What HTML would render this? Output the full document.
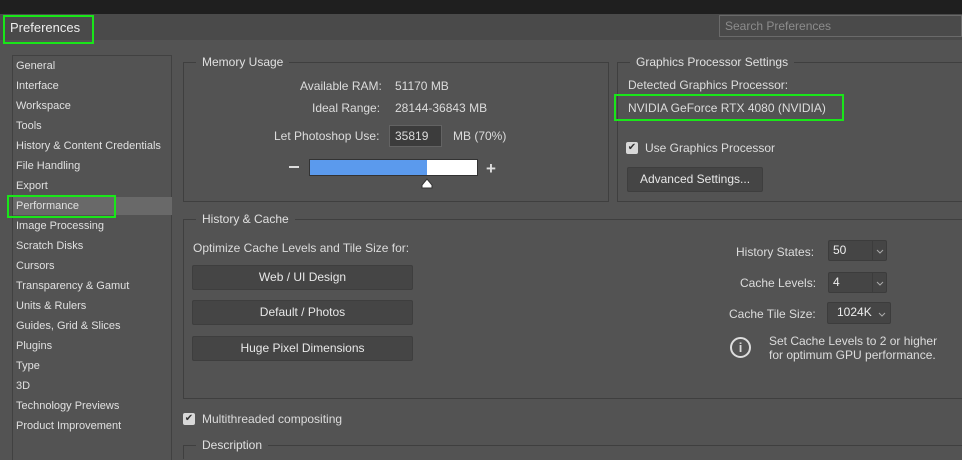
<html style="overflow:hidden;height:460px"><head><style>
body{margin:0;width:962px;height:460px;overflow:hidden;background:#535353;font-family:"Liberation Sans",sans-serif;font-size:12px;color:#dcdcdc;position:relative}
.a{position:absolute;white-space:nowrap}
.top{left:0;top:0;width:962px;height:14px;background:#1f1f1f}
.title{left:0;top:14px;width:962px;height:26px;background:#4a4a4a}
.grn{border:2px solid #19e619;box-sizing:border-box}
.list{left:12px;top:55px;width:160px;height:405px;border:1px solid #414141;border-bottom:none;box-sizing:border-box;background:#535353}
.li{position:absolute;left:3px;font-size:11px;color:#e0e0e0}
fieldset{position:absolute;margin:0;padding:0;border:1px solid #3f3f3f}
legend{padding:0 6px;margin-left:12px;font-size:12px;color:#e0e0e0}
.btn{position:absolute;background:#454545;border:1px solid #3e3e3e;border-radius:2px;color:#e8e8e8;text-align:center;box-sizing:border-box}
.dd{position:absolute;background:#454545;border:1px solid #3c3c3c;border-radius:2px;box-sizing:border-box;color:#eee;padding-left:4px;line-height:19px}
.cb{position:absolute;width:12px;height:12px;background:#d8d8d8;border-radius:2px;color:#333;font-size:10px;line-height:12px;text-align:center}
.chev{position:absolute;top:0;height:100%;border-left:1px solid #3c3c3c;width:14px}
</style></head><body>
<div class="a top"></div>
<div class="a title"></div>
<div class="a grn" style="left:3px;top:15px;width:91px;height:29px"></div>
<div class="a" style="left:10px;top:20px;font-size:13px;color:#eee">Preferences</div>
<div class="a" style="left:719px;top:15px;width:243px;height:22px;border:1px solid #6a6a6a;box-sizing:border-box;background:#4a4a4a"></div>
<div class="a" style="left:725px;top:19px;color:#8c8c8c">Search Preferences</div>
<div class="a list">
<div class="a" style="left:0;top:141px;width:159px;height:18px;background:#696969"></div>
<div class="li" style="top:4px">General</div>
<div class="li" style="top:24px">Interface</div>
<div class="li" style="top:44px">Workspace</div>
<div class="li" style="top:64px">Tools</div>
<div class="li" style="top:84px">History &amp; Content Credentials</div>
<div class="li" style="top:104px">File Handling</div>
<div class="li" style="top:124px">Export</div>
<div class="li" style="top:144px">Performance</div>
<div class="li" style="top:164px">Image Processing</div>
<div class="li" style="top:184px">Scratch Disks</div>
<div class="li" style="top:204px">Cursors</div>
<div class="li" style="top:224px">Transparency &amp; Gamut</div>
<div class="li" style="top:244px">Units &amp; Rulers</div>
<div class="li" style="top:264px">Guides, Grid &amp; Slices</div>
<div class="li" style="top:284px">Plugins</div>
<div class="li" style="top:304px">Type</div>
<div class="li" style="top:324px">3D</div>
<div class="li" style="top:344px">Technology Previews</div>
<div class="li" style="top:364px">Product Improvement</div>
</div>
<div class="a grn" style="left:7px;top:195px;width:109px;height:23px"></div>
<fieldset style="left:183px;top:55px;width:424px;height:145px"><legend>Memory Usage</legend></fieldset>
<div class="a" style="left:300px;top:79px">Available RAM:</div>
<div class="a" style="left:395px;top:79px">51170 MB</div>
<div class="a" style="left:312px;top:101px">Ideal Range:</div>
<div class="a" style="left:395px;top:101px">28144-36843 MB</div>
<div class="a" style="left:274px;top:129px">Let Photoshop Use:</div>
<div class="a" style="left:389px;top:125px;width:53px;height:22px;background:#3c3c3c;border:1px solid #636363;box-sizing:border-box;padding:3px 5px">35819</div>
<div class="a" style="left:453px;top:129px">MB (70%)</div>
<div class="a" style="left:289px;top:166px;width:10px;height:2px;background:#ddd"></div>
<div class="a" style="left:309px;top:159px;width:169px;height:17px;background:#fff;border:1px solid #333;box-sizing:border-box"><div style="width:117px;height:15px;background:#5b9aed"></div></div>
<div class="a" style="left:486px;top:159px;font-size:17px;font-weight:bold;color:#ddd">+</div>
<svg class="a" style="left:421px;top:178px" width="12" height="11"><path d="M1 10 L1 7 L6 1 L11 7 L11 10 Z" fill="#fff" stroke="#333"/></svg>
<fieldset style="left:617px;top:55px;width:345px;height:145px;border-right:none"><legend>Graphics Processor Settings</legend></fieldset>
<div class="a" style="left:628px;top:78px">Detected Graphics Processor:</div>
<div class="a grn" style="left:614px;top:94px;width:230px;height:27px"></div>
<div class="a" style="left:628px;top:101px">NVIDIA GeForce RTX 4080 (NVIDIA)</div>
<div class="cb" style="left:626px;top:142px">✔</div>
<div class="a" style="left:645px;top:141px">Use Graphics Processor</div>
<div class="btn" style="left:627px;top:167px;width:136px;height:25px;line-height:23px">Advanced Settings...</div>
<fieldset style="left:183px;top:212px;width:779px;height:185px;border-right:none"><legend>History &amp; Cache</legend></fieldset>
<div class="a" style="left:193px;top:241px">Optimize Cache Levels and Tile Size for:</div>
<div class="btn" style="left:192px;top:265px;width:221px;height:25px;line-height:23px">Web / UI Design</div>
<div class="btn" style="left:192px;top:300px;width:221px;height:25px;line-height:23px">Default / Photos</div>
<div class="btn" style="left:192px;top:336px;width:221px;height:25px;line-height:23px">Huge Pixel Dimensions</div>
<div class="a" style="left:736px;top:245px">History States:</div>
<div class="dd" style="left:828px;top:240px;width:59px;height:21px">50<div class="chev" style="left:43px"><svg width="14" height="19"><path d="M4 9 L7 12 L10 9" fill="none" stroke="#aaa"/></svg></div></div>
<div class="a" style="left:740px;top:276px">Cache Levels:</div>
<div class="dd" style="left:828px;top:272px;width:59px;height:21px">4<div class="chev" style="left:43px"><svg width="14" height="19"><path d="M4 9 L7 12 L10 9" fill="none" stroke="#aaa"/></svg></div></div>
<div class="a" style="left:729px;top:307px">Cache Tile Size:</div>
<div class="dd" style="left:827px;top:302px;width:64px;height:22px;padding-left:9px">1024K<svg style="position:absolute;left:48px;top:1px" width="12" height="19"><path d="M3 9 L6 12 L9 9" fill="none" stroke="#aaa"/></svg></div>
<div class="a" style="left:730px;top:337px;width:21px;height:21px;border:2px solid #ddd;border-radius:50%;box-sizing:border-box;text-align:center;font-weight:bold;font-size:13px;line-height:17px">i</div>
<div class="a" style="left:769px;top:334px;line-height:14px">Set Cache Levels to 2 or higher<br>for optimum GPU performance.</div>
<div class="cb" style="left:183px;top:413px">✔</div>
<div class="a" style="left:202px;top:412px">Multithreaded compositing</div>
<fieldset style="left:183px;top:438px;width:779px;height:20px;border-right:none;border-bottom:none"><legend>Description</legend></fieldset>
</body></html>
